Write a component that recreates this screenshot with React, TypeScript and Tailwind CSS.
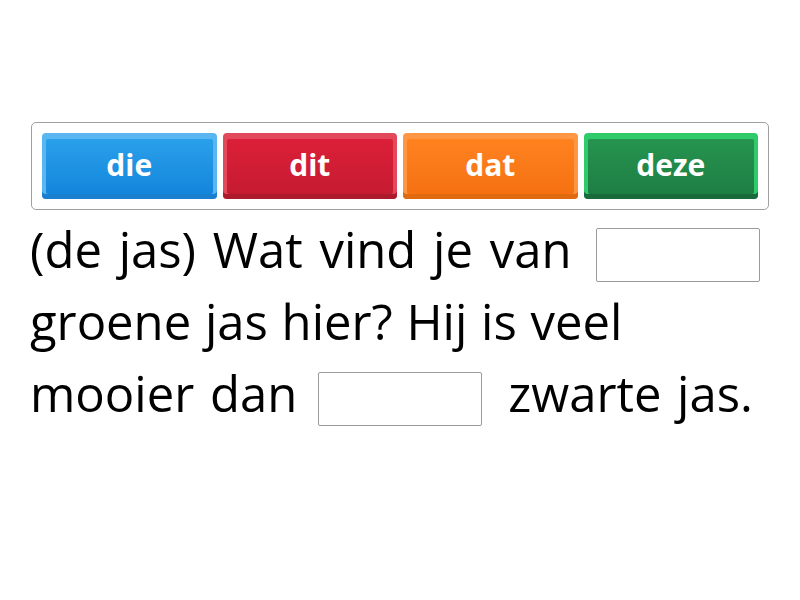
const options = [
  {
    label: "die",
    edge: "bg-[#5ab6f1] shadow-[inset_0_-5px_0_#1a7fcf]",
    face: "bg-linear-to-b from-[#2aa0ea] to-[#1386dc]",
  },
  {
    label: "dit",
    edge: "bg-[#e2495b] shadow-[inset_0_-5px_0_#ac1a2c]",
    face: "bg-linear-to-b from-[#dc2039] to-[#c51b31]",
  },
  {
    label: "dat",
    edge: "bg-[#ff9644] shadow-[inset_0_-5px_0_#df6a10]",
    face: "bg-linear-to-b from-[#ff821f] to-[#f57111]",
  },
  {
    label: "deze",
    edge: "bg-[#2fca69] shadow-[inset_0_-5px_0_#1a6b3b]",
    face: "bg-linear-to-b from-[#26944f] to-[#1e7e44]",
  },
];

function Blank({ className = "mx-[24px]" }: { className?: string }) {
  return (
    <span
      className={`inline-block w-[164px] h-[54px] align-middle border border-[#9a9a9a] rounded-[2px] bg-white ${className}`}
    />
  );
}

export default function App() {
  return (
    <div className="min-h-screen bg-white px-[30px] pt-[122px] font-['Open_Sans',sans-serif]">
      {/* answer options */}
      <div className="flex gap-[6px] border border-[#a0a0a0] rounded-[5px] p-[10px] mx-[1px]">
        {options.map((o) => (
          <div
            key={o.label}
            className={`flex-1 h-[66px] rounded-[4px] pt-[6px] px-[4px] pb-[5px] ${o.edge}`}
          >
            <div
              className={`h-full rounded-[2px] flex items-center justify-center pb-[4px] text-white font-bold text-[30px] ${o.face}`}
            >
              {o.label}
            </div>
          </div>
        ))}
      </div>

      {/* sentence */}
      <div className="mt-[3px] text-[49px] leading-[72px] text-black whitespace-nowrap">
        <div className="[word-spacing:4px]">
          (de jas) Wat vind je van
          <Blank className="ml-[25px]" />
        </div>
        <div className="[word-spacing:1px]">groene jas hier? Hij is veel</div>
        <div className="[word-spacing:3px]">
          mooier dan
          <Blank className="ml-[21px] mr-[26px]" />
          zwarte jas.
        </div>
      </div>
    </div>
  );
}
